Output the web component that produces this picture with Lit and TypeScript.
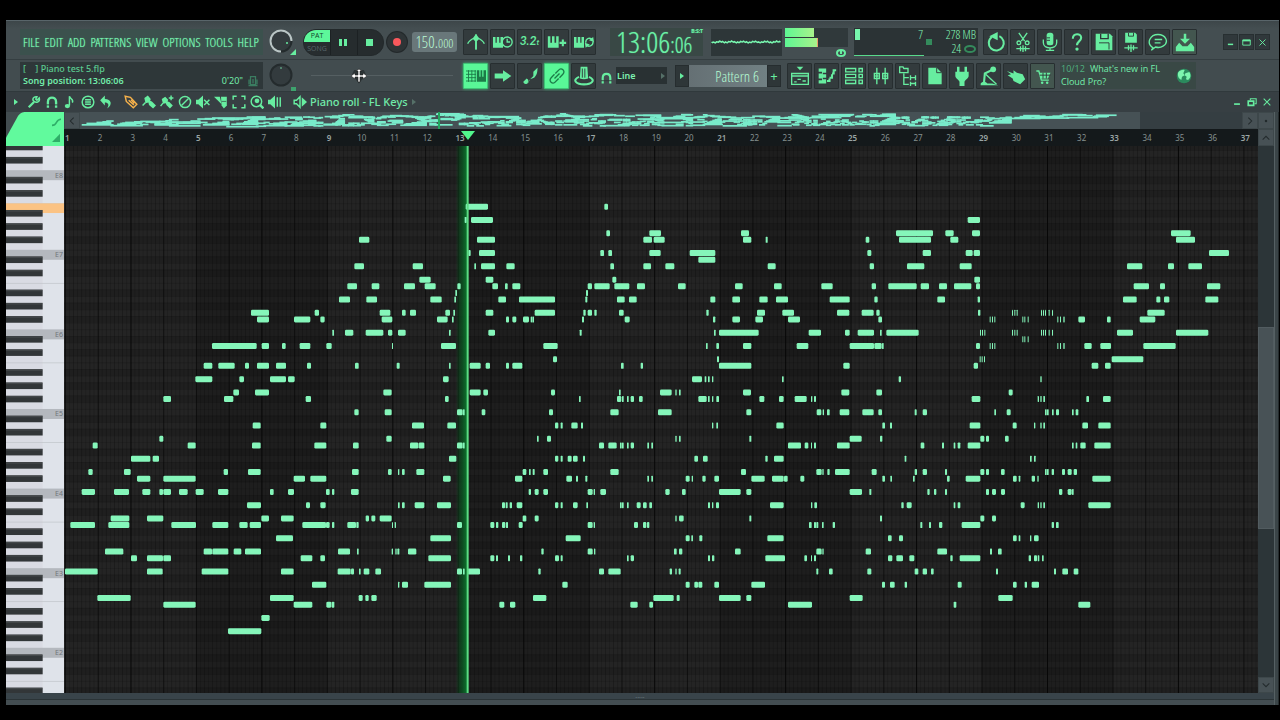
import { LitElement, html, svg, css } from "lit";
import { customElement, state } from "lit/decorators.js";

/* Horizontal unit: one third of a pixel at default zoom. Vertical: one key row = ROW. */
const ROW = 19.9;
const FIRST = 182;
const LEFT = 192;
const WIDTH = 3582;
const HEIGHT = 1641;
const BAR = 98.2;
const BAR0 = 196;
const HEAD = 1403;

type Phrase = { at: number; lanes: Record<number, string> };

const phrases: Phrase[] = [
  { at: 0, lanes: {
    21: "636-770", 24: "611-637 655-704", 26: "586-637", 28: "700-717", 29: "490-513 672-700",
    35: "478-490", 36: "278-293 563-587 756-782 943-979", 38: "393-451 458-477",
    40: "265-278 372-392 671-684 744-782", 41: "411-451 490-587 881-915 931-979",
    43: "245-285 342-387 427-451 478-489 490-513 537-563 587-611 654-685 810-821 864-882",
    45: "741-783 918-930 961-977", 47: "332-388 441-490 784-807 843-881",
    48: "211-285 325-388 514-588 637-685 718-743 749-783 907-978", 50: "828-879",
    52: "315-370 611-636 637-685 701-724 735-783", 53: "393-411 441-489 490-513 902-937 961-975",
    55: "195-293 441-488 605-685 843-881", 57: "936-979", 59: "292-392 810-881",
    60: "490-587 881-937", 62: "784-809", 64: "684-784",
  } },
  { at: 690, lanes: {
    0: "707-774", 2: "704-710 723-789", 5: "387-418 741-795", 7: "715-722 747-795",
    9: "373-402 548-579 733-738 753-795 829-854", 11: "568-602 767-790",
    12: "352-381 425-448 522-555 584-617 682-692 787-804 825-833 847-871", 13: "676-681",
    14: "327-360 409-441 601-635 673-678 805-828 867-975",
    16: "63-117 254-267 449-481 516-527 540-558 646-660 670-675 767-790 914-975",
    17: "81-117 192-241 271-284 455-487 621-653 666-671 828-837 847-859 879-897 902-906 907-912",
    19: "307-312 345-370 407-460 474-487 504-527 657-662 775-795",
    21: "95-117 156-167 209-241 289-305 486-489 633-678 940-983", 23: "969-981",
    24: "45-57 81-117 138-168 231-243 375-386 500-509 657-662 719-752 767-780 828-837 847-877",
    26: "28-42 120-168 174-194 639-656", 28: "75-117 460-485 719-752 760-774 963-975",
    29: "227-243 645-656", 31: "373-386 464-485 681-698 699-704 755-766 957-969",
    33: "68-92 271-289 546-582 652-678 975-985 992-998",
  } },
  { at: 960, lanes: {
    35: "199-215 651-656 681-693",
    36: "99-116 270-295 296-313 411-428 429-434 837-852 865-890 900-905 906-911 921-926 932-942 982-987",
    38: "387-409 705-715 722-728 743-755 759-773 789-795",
    40: "96-116 204-215 234-238 246-254 289-313 608-619 627-632 638-644 670-684 871-896",
    41: "369-392 585-607 739-756 768-774 796-802 982-987",
    43: "18-29 36-43 93-116 626-633 644-656 670-684 803-818 821-825 841-858",
    45: "234-239 246-254 284-313 351-393 546-555 557-563 569-576 590-607 705-715 722-728 759-773 799-804 900-905 906-911 921-926 950-962 969-980",
    47: "137-147 154-166 179-215 608-619 644-656",
    48: "18-29 36-43 82-108 109-116 216-219 224-228 411-426 511-523 528-535 546-556 558-564 596-608 803-818 821-825 942-954 969-979 981-988",
    50: "331-393 737-782", 52: "54-90 111-116 215-219 226-230 232-238 264-289 664-671 803-818 822-826",
    53: "325-393 511-523 528-534 564-570 600-607 705-717 722-728 921-926 932-942",
    55: "53-92 93-102 117-122 131-148 166-183 411-426 429-434 443-480 655-662 837-852 865-902",
    57: "234-238 246-264 313-393 727-743", 59: "116-128 136-146 154-170 639-679",
    60: "19-34 35-43 538-553 570-586 931-953",
  } },
  { at: 1680, lanes: {
    0: "133-144", 4: "139-150 268-303 543-567", 5: "250-276 281-314 549-574 617-623 917-928",
    7: "121-132 145-156 268-302 389-466 922-934", 8: "415-466",
    9: "151-162 250-273 316-343 623-647 929-942", 11: "157-169",
    12: "83-96 103-149 163-208 231-255 354-377 525-548 642-665 784-818 935-948 985-1070", 13: "78-84",
    14: "76-82 171-194 207-230 451-466 517-540 598-623 648-684 809-869 943-953",
    16: "70-77 83-96 103-110 177-191 439-446 591-615 667-702 831-868 905-941 949-959",
    17: "66-72 194-209 459-466 517-540 586-609 684-720 955-966",
    19: "59-65 462-467 477-596 746-783 855-869 893-942 960-965 979-1076",
    21: "438-443 469-477 549-574 710-745 869-942 943-965 966-971", 23: "471-477",
    24: "183-191 242-249 477-574 850-869", 26: "396-426 434-439 444-449 456-460 666-671 1016-1023",
    28: "177-182 300-335 346-350 357-362 549-573 844-868 949-966",
    29: "57-62 171-184 186-191 201-206 212-222 237-248 415-440 444-449 456-460 469-477 598-613 657-671 704-740 753-757 762-768",
    31: "151-176 294-335 559-574 770-784 788-792 801-809 839-868 907-941 955-966",
    33: "34-53 63-69 456-460 469-474 649-671 967-975 990-996",
  } },
  { at: 1920, lanes: {
    35: "106-110 117-122 328-334 629-665 720-727",
    36: "34-39 444-483 494-505 513-516 522-528 591-629 842-853 906-912 941-946 953-961",
    38: "163-174 189-203 376-383 402-431 794-799",
    40: "303-318 529-545 547-551 562-569 585-629 695-710 824-831 848-861 915-921",
    41: "34-39 137-149 155-159 187-197 223-237 334-374 396-431 432-443 481-493 727-735 751-756 819-824 921-929",
    43: "76-89 126-137 237-302 319-334 629-666 688-694 862-869 882-889 915-921",
    45: "28-36 204-210 216-220 228-237 390-431 513-517 523-531 784-791 800-815 941-946 953-961",
    47: "106-110 117-131 328-334 720-726",
    48: "507-515 522-528 529-535 546-551 578-585 841-847 867-873 897-907",
    50: "137-149 154-159 178-187 382-431 744-755 777-789",
    52: "102-110 117-127 285-302 529-545 547-551 677-693 892-921",
    53: "204-210 216-223 376-435 493-501 513-516 522-528 744-757 769-789 808-823 931-938",
    55: "89-96 106-110 116-122 529-535 567-578 682-694 824-835 848-861 873-881",
    57: "137-149 163-174 175-187 223-237 334-375 726-735 750-764 794-801 953-965",
    59: "40-101 110-119 237-302 319-334 629-668", 60: "28-39 444-516 941-949",
  } },
  { at: 2670, lanes: {
    2: "233-270", 4: "18-129 166-191 246-270 843-902", 5: "27-123 181-205 858-915",
    7: "98-123 227-248 251-270 957-1017", 9: "51-103 209-245 711-757 834-852 895-936", 11: "253-270",
    12: "92-117 147-171 192-244 258-270 731-777 810-825 951-991",
    14: "142-165 263-270 699-740 799-811 822-838 946-985",
    16: "264-271 366-369 373-376 380-383 453-456 459-462 465-468 476-479 486-489 772-824",
    17: "299-302 306-309 313-316 397-400 403-406 413-416 502-505 510-513 520-524 565-585 651-662 749-796",
    19: "270-273 276-279 283-286 366-369 373-376 380-383 453-456 459-462 465-468 476-479 486-489 681-729 858-955",
    20: "397-400 403-406 413-416",
    21: "258-270 299-302 306-309 313-316 502-505 510-513 520-524 583-605 631-663 760-857",
    23: "269-272 275-278 282-285 665-760", 24: "251-264 605-625 645-662", 26: "451-455", 28: "356-368",
    29: "245-271 443-447 451-455 460-465 589-597 639-662",
    31: "74-80 98-111 313-318 350-362 465-470 471-476 486-491 498-507 546-551 557-565",
    33: "239-271 368-380 432-436 451-455 460-465 577-594 625-662",
  } },
  { at: 2850, lanes: {
    35: "91-103 108-117 165-176", 36: "53-91 366-371 377-382 391-407 433-482", 38: "240-245 252-257",
    40: "91-103 108-117 153-164 285-290 291-296 305-312 336-345 353-365 371-381",
    41: "47-91 189-200 206-211 245-255 262-266 427-482",
    43: "108-117 126-138 153-165 327-337 353-365 366-371",
    45: "212-224 263-267 271-275 280-285 415-482", 47: "91-103 126-138", 48: "35-91 305-312 318-326",
    50: "189-200 206-211 240-244 252-266", 52: "120-126 144-155",
    53: "29-91 236-243 252-261 263-268 276-281", 55: "138-144 312-318 337-354 371-385",
    57: "189-200 224-231 245-267", 59: "145-188", 60: "385-421",
  } },
];

interface Note { row: number; x: number; w: number }

const notes: Note[] = phrases.flatMap((p) =>
  Object.entries(p.lanes).flatMap(([row, spans]) =>
    spans.split(" ").map((s) => {
      const [a, b] = s.split("-").map(Number);
      return { row: Number(row), x: p.at + a, w: b - a };
    })));

const mod = (n: number) => ((n % 12) + 12) % 12;
const BLACK = new Set([1, 3, 5, 8, 10]);
const rows = Array.from({ length: 84 }, (_, i) => i - 10);
const top = (n: number) => FIRST + (n - 0.5) * ROW;
const wave = Array.from({ length: 70 }, (_, i) =>
  `${i + 0.5},${(13 + Math.sin(i * 2.1) * 0.5 + Math.sin(i * 0.55) * 0.5).toFixed(1)}`).join(" ");

const shapes: Record<string, unknown> = {
  metro: svg`<path class="s" d="M12 3v18M2 14c2-5 7-6 10-8 3 2 8 3 10 8"/><path d="m8 8 4-6 4 6-3 3v10h-2V11z"/>`,
  keysClock: svg`<path d="M0 6h3v7h1.500V6h3v7H9V6h3v13H0z"/><circle class="s" cx="17" cy="12" r="6"/><path class="s" d="M17 8v4h3.500"/>`,
  keysPlus: svg`<path d="M1 5h3v8h2V5h3v8h2V5h3v14H1z"/><path class="s b" d="M15 13h8M19 9v8"/>`,
  keysLoop: svg`<path d="M0 6h3v7h1.500V6h3v7H9V6h3v13H0z"/><path class="s" d="M14 13c0-6 6-7 8-3M23 11c0 6-6 8-8 4"/><path d="m23 6 1 6-6-2zM14 19l-1-6 6 2z"/>`,
  typing: svg`<path d="M13 5h3v8h1.500V5h2v8H21V5h3v14H13z"/><path class="s t" d="M0 6h12M0 10h12M0 14h12M0 18h12M3 5v14M7 5v14M11 5v14"/>`,
  arrow: svg`<path d="M2 9h10V5l10 7-10 7v-4H2z"/>`,
  slide: svg`<path d="M8 15a3 3 0 1 1-3 6c4 0 5-1 6-4l5-5v-5l5-5c0 6-1 9-4 12l-5 2-2 4c-3 3-6 1-6-1z"/>`,
  link: svg`<path class="s" d="m9 15 6-6M9 10l-4 4c-4 4 2 9 5 5l4-4M15 14l4-4c4-4-2-9-5-5l-4 4"/>`,
  knobHat: svg`<path d="M8 1h8l1 14c-3 1-7 1-10 0z"/><path class="s b" d="M6 13c-9 4-3 9 6 9s15-5 6-9"/><path class="cut t" d="M10 3v11M13 3v11"/>`,
  magnet: svg`<path class="s bb" d="M5 22V12c0-10 14-10 14 0v10"/><path class="cut" d="M2 17h20"/>`,
  playlist: svg`<path class="s" d="M2 9h20v13H2zM2 12h20M5 19h3M9 16h4M15 18h4"/><path d="M8 1h8l-4 4z"/>`,
  piano: svg`<path d="M2 3h9v5H7v2h4v4H7v2h4v5H2v-4h4v-2H2v-6h4V7H2z"/><path class="s b" d="M12 18h3v-3M15 14h3v-4M18 9h2V5h3"/>`,
  rack: svg`<path class="s" d="M2 3h12v4H2zM2 10h12v4H2zM2 17h12v4H2z"/><path class="s" d="M18 3h4v4h-4zM18 10h4v4h-4zM18 17h4v4h-4z"/>`,
  mixer: svg`<path class="s" d="M7 2v20M17 2v20M4 9h6v6H4zM14 9h6v6h-6z"/><path d="M5 11h4v2H5zM15 11h4v2h-4z"/>`,
  browser: svg`<path class="s" d="M2 1h4l1 2h5v5H2zM7 9v13h6M7 14h6M15 11v6M21 11v6M15 14h6M15 19v5M21 19v5M15 21h6"/>`,
  page: svg`<path d="M4 2h10l6 6v14H4z"/><path class="cut t" d="M14 2v6h6"/>`,
  plug: svg`<path d="M6 1h3v6h6V1h3v6h2v5c0 3-4 4-5 7v5H9v-5c-1-3-5-4-5-7V7h2z"/>`,
  robot: svg`<path class="s b" d="M17 4 7 9l-1 11"/><circle cx="17" cy="4" r="3.500"/><path d="M2 21c2-3 6-3 8 0l6 0 7 2H2z"/><path class="s" d="m8 10 13 12"/>`,
  hand: svg`<path d="m1 6 8 3V5l4 3 7 2 3 6-6 6-8-4-1-3-6-4 4-1z"/>`,
  cart: svg`<path class="s" d="M4 6h3l3 11h9"/><path d="M8 8h13l-3 7H9z"/><circle cx="11" cy="20" r="1.500"/><circle cx="17" cy="20" r="1.500"/><path class="cut t" d="M12 8v7M16 8v7M8 11h13"/>`,
  undo: svg`<path class="s b" d="M7 6a9 9 0 1 0 9-1"/><path d="M4 5 14 0v10z"/>`,
  cut: svg`<path class="s" d="m7 1 7 10M17 1l-7 10"/><circle class="s" cx="7" cy="13" r="2.200"/><circle class="s" cx="17" cy="13" r="2.200"/><path class="s" d="M4 20h16M9 17v6M12 16v8M15 17v6"/>`,
  mic: svg`<rect x="8" y="1" width="8" height="15" rx="3"/><path class="s" d="M4 9v4c0 8 16 8 16 0V9M12 19v3M7 22h10"/><path class="cut t" d="M8 7h4M8 10h4"/>`,
  help: svg`<path class="s b" d="M7 8c0-7 10-7 10-1 0 4-5 4-5 9"/><circle cx="12" cy="20.500" r="2"/>`,
  save: svg`<path d="M2 2h17l3 3v17H2z"/><path class="cut" d="M8 2v6h9V2"/><path class="cut t" d="M6 13h12v8"/>`,
  saveAs: svg`<path d="M5 1h12l2 2v10H5z"/><path class="cut t" d="M9 1v4h6V1"/><path class="s" d="M4 19h16M9 16v6M12 15v9M15 16v6"/>`,
  chat: svg`<path class="s" d="M6 19C-3 13 3 3 12 3s14 9 6 14c-3 2-6 2-9 1l-5 4zM8 9h9M8 13h7"/>`,
  render: svg`<path d="M10.500 2h3v6H18l-6 6-6-6h4.500z"/><path d="M1 18l4-5 4 4h6l4-4 4 5v5H1z"/>`,
  wrench: svg`<path class="s bb" d="m3 21 9-9"/><path class="s b" d="M21 5c2 7-5 9-9 6s-1-9 5-8l-2 4 2 2z"/>`,
  note: svg`<path class="s b" d="M11 18V2c1 5 8 5 5 11"/><ellipse cx="7.500" cy="19" rx="4.500" ry="3.500"/>`,
  menu: svg`<circle class="s b" cx="12" cy="12" r="10"/><path class="s b" d="M7 8h10M7 12h10M7 16h10"/>`,
  back: svg`<path d="M2 9 10 1v6c11 0 14 10 4 16 4-6 2-10-4-10v5z"/>`,
  pencil: svg`<path class="s b" d="m2 2 2 9 12 11 6-6L11 4z"/><path class="s b" d="m8 9 9 8M12 8l6 6"/>`,
  brush: svg`<path d="m4 5 6-4 5 6-1 3 3 1 7 7-5 5-7-6-1-4-5 1z"/><path class="s b" d="m1 18 5-5"/>`,
  brushPlus: svg`<path d="m3 7 6-4 5 5-1 3 3 1 6 6-5 5-6-6-1-3-5 1z"/><path class="s b" d="M15 5h8M19 1v8M1 19l4-5"/>`,
  stop: svg`<circle class="s b" cx="12" cy="12" r="9.500"/><path class="s b" d="m6 18 12-12"/>`,
  mute: svg`<path d="M0 8h4l8-7v22l-8-7H0z"/><path class="s b" d="m14 8 9 9M23 8l-9 9"/>`,
  slice: svg`<path d="M0 3h10l3 13z"/><path d="M12 3h10v15l-5 5-4-5z"/><path class="cut t" d="M13 11h8"/>`,
  select: svg`<path class="s b" d="M2 8V2h6M16 2h6v6M22 16v6h-6M8 22H2v-6"/>`,
  zoom: svg`<circle class="s b" cx="11" cy="11" r="9"/><circle cx="12" cy="10" r="4"/><path class="s bb" d="m17 17 6 6"/>`,
  listen: svg`<path d="M0 8h4l8-7v22l-8-7H0z"/><path class="s b" d="M16 4v16M21 4v16"/>`,
  speaker: svg`<path class="s b" d="M2 9h4l6-6v18l-6-6H2z"/><path d="m15 4 9 8-9 8z"/>`,
  globe: svg`<circle class="dim" cx="12" cy="12" r="11"/><path class="bright" d="M3 7c3-4 7-5 10-4l-2 5 2 3-4 2-1 5C4 16 2 12 3 7zM14 8l6-2c3 5 2 9-2 12l-3-1 1-4-3-2z"/>`,
  min: svg`<path class="s bb" d="M5 17h14"/>`,
  max: svg`<path class="s b" d="M2 5h20v14H2z"/><path class="s bb" d="M2 7h20"/>`,
  restore: svg`<path class="s bb" d="M3 10h13v10H3z"/><path class="s b" d="M8 8V4h14v12h-4"/>`,
  close: svg`<path class="s b" d="m4 4 16 16M20 4 4 20"/>`,
  metronome: svg`<path class="s b" d="M7 3h10v16H7zM3 21h18M12 8v9M4 9v10M20 9v10"/>`,
};

const icon = (name: string) => html`<svg class="ic" viewBox="0 0 24 24" aria-hidden="true">${shapes[name]}</svg>`;

const tools: [string, string][] = [
  ["metro", "Metronome"], ["keysClock", "Wait for input"], ["digits", "Countdown"],
  ["keysPlus", "Blend recording"], ["keysLoop", "Loop recording"]];
const tools2: [string, string][] = [
  ["typing", "Typing keyboard"], ["arrow", "Step edit"], ["slide", "Slide"], ["link", "Group link"], ["knobHat", "Multilink"]];
const panels: [string, string][] = [
  ["playlist", "Playlist"], ["piano", "Piano roll"], ["rack", "Channel rack"], ["mixer", "Mixer"], ["browser", "Browser"],
  ["page", "Notes"], ["plug", "Plugins"], ["robot", "Tempo tapper"], ["hand", "Touch controller"], ["cart", "Shop"]];
const files: [string, string][] = [
  ["undo", "Undo"], ["cut", "Edit audio"], ["mic", "Record"], ["help", "Help"], ["save", "Save"],
  ["saveAs", "Save version"], ["chat", "Chat"], ["render", "Render"]];
const rollA = ["wrench", "magnet", "note", "menu", "back"];
const rollB = ["pencil", "brush", "brushPlus", "stop", "mute", "slice", "select", "zoom", "listen"];

@customElement("app-root")
export class AppRoot extends LitElement {
  @state() private active = new Set(["typing", "link"]);

  private toggle(id: string) {
    const next = new Set(this.active);
    next.has(id) ? next.delete(id) : next.add(id);
    this.active = next;
  }

  static styles = css`
    :host { --narrow: "Open Sans Condensed Light", "Open Sans Condensed", "Noto Sans ExtraCondensed", "Liberation Sans Narrow", Roboto, sans-serif;
      display: flex; min-height: 100vh; box-sizing: border-box; padding: 20px 1px 15px 6px; background: #000;
      color: #67eda0; font: 10px/12px "Noto Sans", sans-serif; }
    * { box-sizing: border-box; }
    button, input, select { font: inherit; color: inherit; margin: 0; padding: 0; border: 0; background: none; border-radius: 0; }
    button { display: flex; align-items: center; justify-content: center; }
    a { color: inherit; text-decoration: none; }
    svg { display: block; fill: currentColor; }
    .ic { width: 20px; height: 20px; flex: none; }
    .s, .cut { fill: none; stroke: currentColor; stroke-width: 1.600; }
    .b { stroke-width: 2.500; } .bb { stroke-width: 4; } .t { stroke-width: 1.100; }
    .cut { stroke: #30383a; }
    .dim { fill: #2b8a5d; } .bright { fill: #7df5ae; }
    .app { flex: 1; min-width: 0; display: flex; flex-direction: column; background: #424c4f; border-top: 1px solid #59656a; }
    .bar { display: flex; align-items: center; padding: 0 9px 0 14px; }
    .bar.one { height: 38px; padding-top: 4px; background: linear-gradient(#3d4649, #444e51 20%); }
    .bar.two { height: 33px; border-top: 1px solid #353e41; border-bottom: 1px solid #30393c; }
    .menu { width: 243px; height: 26px; display: flex; align-items: center; justify-content: space-between; padding: 0 4px 0 3px;
      background: #3b514d; font: 300 13px/18px var(--narrow); color: #7dfab6; text-shadow: 0 0 1px #62e89a; }
    .hint { width: 243px; height: 27px; background: #2e3739; padding: 1px 4px 2px 3px; display: grid; grid-template-columns: 1fr auto 16px; align-items: end;
      font-size: 9px; line-height: 12px; }
    .hint p { margin: 0; color: #5bc98f; font-weight: 500; grid-column: 1 / -1; white-space: pre; }
    .hint b { font-weight: 600; color: #72eba9; }
    .hint span { color: #72eba9; }
    .hint .ic { width: 12px; height: 12px; color: #3b7d61; justify-self: end; }
    .knob { position: relative; width: 40px; height: 32px; padding: 3px 0 0 3px; }
    .knob input { position: absolute; inset: 0; width: 100%; height: 100%; opacity: 0; }
    .transport { width: 81px; height: 27px; display: flex; background: #262c2e; border-radius: 13px; overflow: hidden; border: 1px solid #23292b; }
    .modes { width: 26px; display: flex; flex-direction: column; font: 7px/11px "Open Sans", sans-serif; }
    .modes button { flex: 1; background: #272d2f; color: #59666a; }
    .modes .on { background: #5df79a; color: #14452b; }
    .transport > button { flex: 1; border-left: 1px solid #1c2123; }
    .transport .ic { width: 12px; height: 12px; }
    .rec { width: 20px; height: 20px; margin-left: 3px; border-radius: 50%; background: #2e3436; box-shadow: 0 0 0 1px #23292b; }
    .rec i { width: 8px; height: 8px; border-radius: 50%; background: #f9585c; }
    .tempo { width: 45px; height: 20px; margin: 0 6px 0 5px; border-radius: 3px; background: #69777a; color: #b9f9d3;
      font: 300 16px/20px var(--narrow); align-items: baseline; }
    .tempo small { font-size: 13px; }
    .set { display: flex; gap: 2px; }
    .set button { width: 25px; height: 26px; background: #333b3d; border: 1px solid #272e30; border-radius: 1px; }
    .set button.on { background: #59f797; color: #1c7b48; border-color: #3fc376; box-shadow: 0 0 3px #37c473; }
    .set button.lit { background: #43564f; }
    .digits { font: italic 500 12px/14px Roboto, sans-serif; }
    .digits small { font-size: 8px; }
    .time { position: relative; width: 93px; height: 28px; margin: 0 8px 0 14px; background: #394845; padding-left: 6px; display: flex; align-items: baseline;
      font: 300 30px/28px var(--narrow); color: #6cf1a6; text-shadow: 0 0 1px #4fc587; }
    .time span { font-size: 22px; }
    .time small { position: absolute; right: 0; top: 0; font: 700 5px/6px "Noto Sans", sans-serif; }
    .scope { width: 71px; height: 27px; background: #2d3638; }
    .scope polyline { fill: none; stroke: #79f8b0; stroke-width: 1.500; }
    .meter { width: 63px; height: 28px; margin: 0 6px 0 3px; display: grid; grid-template-rows: 10px 9px 9px; background: linear-gradient(#30393b 19px, transparent 19px); }
    .meter i { background: linear-gradient(90deg, #5df793, #a8f28a); height: 9px; }
    .meter i.l { width: 29px; } .meter i.r { width: 33px; border-right: 1px solid #e99b6c; }
    .meter svg { width: 10px; height: 8px; justify-self: end; margin: 2px 2px 0 0; }
    .cpu { width: 124px; height: 28px; margin-right: 5px; background: #2b3335; display: grid; grid-template-columns: 70px 1fr; font: 300 12px/14px var(--narrow); color: #84f7b7; }
    .cpu .graph { position: relative; text-align: right; border-bottom: 1px solid #58da8b; padding-right: 1px; }
    .cpu .graph i { position: absolute; left: 1px; top: 1px; width: 5px; height: 11px; background: #77f6ad; }
    .cpu .mem { display: grid; line-height: 14px; padding-right: 2px; grid-template-columns: 6px 1fr; }
    .cpu .mem i { grid-row: 1 / 3; align-self: center; width: 6px; height: 6px; margin-left: 2px; background: #348b5c; }
    .cpu .mem span { display: flex; justify-content: flex-end; align-items: center; gap: 3px; }
    .cpu .mem svg { width: 12px; height: 8px; fill: none; stroke: #348b5c; stroke-width: 2; }
    .win { margin-left: auto; display: flex; gap: 1px; }
    .win button { width: 15px; height: 16px; background: #30383b; border: 1px solid #272f31; }
    .win .ic { width: 9px; height: 9px; }
    .song { position: relative; width: 160px; height: 30px; padding: 0 10px 0 8px; display: flex; }
    .song input { appearance: none; width: 100%; background: linear-gradient(#555f62, #555f62) center / 100% 1px no-repeat; }
    .song input::-webkit-slider-thumb { appearance: none; width: 14px; height: 16px; background: #2c3436; clip-path: polygon(15% 15%, 85% 15%, 100% 45%, 50% 100%, 0 45%); }
    .song svg { position: absolute; left: 48px; top: 7px; width: 16px; height: 16px; }
    .snap { width: 14px; margin: 4px 3px 0 3px; }
    .snap .ic { width: 13px; height: 14px; }
    .pick { position: relative; width: 51px; margin-right: 8px; }
    .pick select { appearance: none; display: block; width: 100%; height: 17px; padding-left: 1px; background: #293133; color: #7df0b0; font-size: 9px; font-weight: 600; }
    .pick i, .caret { width: 0; height: 0; border: 3px solid transparent; border-left: 4px solid #557068; border-right: 0; }
    .pick i { position: absolute; right: 2px; top: 6px; pointer-events: none; }
    .pattern { display: flex; height: 22px; margin-right: 6px; }
    .pattern button { width: 14px; background: #2e3638; border: 1px solid #262d2f; font-size: 13px; }
    .pattern input { width: 78px; text-align: right; padding-right: 8px; background: linear-gradient(90deg, #657074, #718083); color: #b5fbd3; font: 300 15px/20px var(--narrow); }
    .caret.g { border-left-color: #67eda0; }
    .news { width: 136px; height: 27px; margin-left: 5px; background: #394845; display: grid; grid-template-columns: auto 1fr 20px; column-gap: 5px; align-items: center;
      padding: 1px 0 1px 1px; font: 9px/12px "Open Sans", sans-serif; color: #74edab; }
    .news em { font-style: normal; color: #50b080; }
    .news .q { grid-column: 1 / 3; grid-row: 2; }
    .news .ic { width: 16px; height: 16px; grid-column: 3; grid-row: 1 / 3; }
    .title { display: flex; align-items: center; height: 20px; padding: 0 5px 0 5px; background: #373f43; }
    .title button { width: 18px; height: 18px; }
    .title .ic { width: 14px; height: 14px; }
    .title .arrow { width: 10px; margin-right: 4px; }
    .title .gap { margin-left: 7px; }
    .title .pencil { color: #f7b24b; }
    .title h1 { margin: 0 4px 0 1px; font: 500 11px/14px "Noto Sans", sans-serif; color: #71eaa9; }
    .title .win2 { margin-left: auto; display: flex; }
    .title .win2 button { width: 15px; }
    .title .win2 .ic { width: 10px; height: 10px; }
    .editor { flex: 1; display: grid; grid-template-columns: 58px minmax(0, 1fr) 16px 5px; grid-template-rows: 17px 17px minmax(0, 1fr) 12px; }
    .corner { grid-row: 1 / 3; width: 58px; height: 100%; color: #61fa9d; }
    .corner .m { fill: #2fae68; }
    .over { display: flex; background: #353e42; }
    .over button, .cap { width: 16px; background: #475155; color: #232b2d; border: 1px solid #3d474a; }
    .over .ic, .cap .ic { width: 10px; height: 10px; }
    .over .map { flex: 1; height: 100%; min-width: 0; fill: #79eccb; background: #353e42; }
    .over .map .view { fill: #465155; }
    .ruler { overflow: hidden; position: relative; background: #14191b; }
    .ruler ol { list-style: none; display: flex; margin: 0 0 0 -13px; padding: 3px 0 0; width: 100%; color: #84908f; font-size: 8px; line-height: 12px; }
    .ruler li { flex: 0 0 2.741%; text-align: center; }
    .ruler li.k { font-weight: 600; color: #9aa5a4; }
    .ruler svg { position: absolute; top: 1px; width: 14px; height: 10px; margin-left: -7px; color: #51f78c; }
    .keys { position: relative; }
    .keys svg, .roll svg { position: absolute; inset: 0; width: 100%; height: 100%; }
    .keys span { position: absolute; right: 1px; font: 7px/8px "Noto Sans", sans-serif; color: #70767b; }
    .roll { position: relative; }
    .scroll { display: flex; flex-direction: column; background: #2c3538; }
    .scroll button { height: 16px; }
    .track { flex: 1; display: grid; grid-template-rows: 181fr 202fr 148fr; }
    .track i { grid-row: 2; background: #485256; border: 1px solid #525c60; }
    .edge { grid-column: 4; grid-row: 1 / 5; background: #3b4548; border-left: 1px solid #556063; border-right: 1px solid #252c2e; }
    .foot { grid-column: 1 / 4; background: linear-gradient(#39444a 6px, #2b3437 6px, #2b3437 7px, #434d51 7px); text-align: center; font-size: 7px; line-height: 5px; color: #67757a; }
  `;

  private buttons(list: [string, string][], lit = "") {
    return html`<div class="set">${list.map(([id, label]) => html`
      <button aria-label=${label} class=${this.active.has(id) ? "on" : id === lit ? "lit" : ""} @click=${() => this.toggle(id)}>
        ${id === "digits" ? html`<span class="digits">3.2<small>t</small></span>` : icon(id)}
      </button>`)}</div>`;
  }

  private knob(label: string, big: boolean) {
    return html`<label class="knob"><input type="range" aria-label=${label} />
      <svg width="30" height="28" viewBox="0 0 30 28">
        <circle cx="15" cy="12" r="10.500" fill="#333b3e" stroke="#242b2d" stroke-width="2"/>
        ${big
          ? svg`<path d="M15 22.500A10.500 10.500 0 1 1 25.500 12" fill="none" stroke="#b9c5c5" stroke-width="2"/><circle cx="21" cy="14" r="1" fill="#67eda0"/><path d="M30 20v6h-6z"/>`
          : svg`<circle cx="15" cy="5" r="1" fill="#5c9c7f"/><path d="M25 24h5v4h-5z" fill="#3ea36e"/>`}
      </svg></label>`;
  }

  private renderKeys() {
    return html`<div class="keys">
      <svg viewBox="0 0 174 1641" preserveAspectRatio="none" aria-hidden="true">
        <rect width="174" height="1641" fill="#dfe3ea"/>
        <rect width="110" height="1641" fill="#d6d6dd" opacity=".6"/>
        ${rows.map((n) => {
          const m = mod(n);
          if (m === 7) return svg`<rect y=${top(n)} width="174" height="30" fill="#b4b8be"/>`;
          if (m === 0) return svg`<rect y=${top(n)} width="174" height="2" fill="#bfc3c8"/>`;
          return null;
        })}
        <rect y=${top(0)} width="174" height="29" fill="#fbc384"/>
        ${rows.filter((n) => BLACK.has(mod(n))).map((n) => svg`
          <rect y=${top(n)} width="110" height=${ROW} fill="#323638"/>
          <rect y=${top(n) + 1} width="108" height="4" fill="#44484a"/>`)}
      </svg>
      ${[8, 7, 6, 5, 4, 3, 2].map((o) => html`<span style="top:${((top(-5 + (8 - o) * 12) + 4) / HEIGHT) * 100}%">E${o}</span>`)}
    </div>`;
  }

  private renderRoll() {
    const bars = Array.from({ length: 38 }, (_, i) => i);
    return html`<div class="roll">
      <svg viewBox="${LEFT} 0 ${WIDTH} ${HEIGHT}" preserveAspectRatio="none" role="img" aria-label="Notes">
        <defs><linearGradient id="glow"><stop offset="0" stop-color="#0b5a22" stop-opacity="0"/><stop offset=".45" stop-color="#0a5020" stop-opacity=".75"/><stop offset="1" stop-color="#0d7a30"/></linearGradient></defs>
        <rect x=${LEFT} width=${WIDTH} height=${HEIGHT} fill="#242424"/>
        ${rows.map((n) => BLACK.has(mod(n)) ? svg`<rect x=${LEFT} y=${top(n)} width=${WIDTH} height=${ROW} fill="#1f1f1f"/>` : null)}
        ${rows.map((n) => svg`<rect x=${LEFT} y=${top(n)} width=${WIDTH} height="2" fill="#191919" opacity=".5"/>`)}
        ${[4, 12, 20, 28].map((b) => svg`<rect x=${BAR0 + b * BAR} width=${BAR * 4} height=${HEIGHT} fill="#000" opacity=".14"/>`)}
        ${bars.map((b) => [0, 1, 2, 3, 4, 5, 6, 7].map((q) => svg`<rect x=${BAR0 + b * BAR + q * BAR / 8 - 1} width=${q ? 2 : 3} height=${HEIGHT} fill="#060606" opacity=${q ? (q % 2 ? 0.2 : 0.35) : b % 4 === 2 ? 0.95 : 0.65}/>`))}
        <rect x=${HEAD - 36} width="36" height=${HEIGHT} fill="url(#glow)"/>
        ${notes.map((n) => svg`<rect x=${n.x} y=${FIRST + n.row * ROW - 9} width=${n.w} height="18" rx=${Math.min(4, n.w / 3)} fill="#85f6ba"/>`)}
        <rect x=${HEAD - 3} width="6" height=${HEIGHT} fill="#5cdc83"/>
      </svg></div>`;
  }

  render() {
    return html`<main class="app">
      <div class="bar one">
        <nav class="menu">${["FILE", "EDIT", "ADD", "PATTERNS", "VIEW", "OPTIONS", "TOOLS", "HELP"].map((m) => html`<a href="#">${m}</a>`)}</nav>
        ${this.knob("Main volume", true)}
        <div class="transport">
          <div class="modes"><button class="on">PAT</button><button>SONG</button></div>
          <button aria-label="Pause"><svg class="ic" viewBox="0 0 12 12"><path d="M1 3h3v7H1zM6 3h3v7H6z"/></svg></button>
          <button aria-label="Stop"><svg class="ic" viewBox="0 0 12 12"><path d="M2 3h7v7H2z"/></svg></button>
        </div>
        <button class="rec" aria-label="Record"><i></i></button>
        <button class="tempo">150.<small>000</small></button>
        ${this.buttons(tools)}
        <div class="time">13:06<span>:06</span><small>B:S:T</small></div>
        <svg class="scope" viewBox="0 0 71 27"><polyline points=${wave}/></svg>
        <div class="meter"><i class="l"></i><i class="r"></i><svg viewBox="0 0 10 8"><path fill="none" stroke="currentColor" stroke-width="2" d="M1 4c0-4 8-4 8 0s-8 4-8 0M5 2v3"/></svg></div>
        <div class="cpu"><div class="graph"><i></i>7</div>
          <div class="mem"><i></i><span>278 MB</span><span>24 <svg viewBox="0 0 12 8"><ellipse cx="6" cy="4" rx="5" ry="3"/></svg></span></div></div>
        ${this.buttons(files, "render")}
        <div class="win">${[["min", "Minimize"], ["max", "Maximize"], ["close", "Close"]].map(([i, l]) => html`<button aria-label=${l}>${icon(i)}</button>`)}</div>
      </div>
      <div class="bar two">
        <div class="hint"><p>[    ] Piano test 5.flp</p><b>Song position: 13:06:06</b><span>0'20"</span>${icon("metronome")}</div>
        ${this.knob("Main pitch", false)}
        <div class="song"><input type="range" aria-label="Song position" min="0" max="100" value="32" />
          <svg viewBox="0 0 16 16"><path d="M0 8l4-3v2h3V3H5l3-2 3 2H9v4h3V5l4 3-4 3V9H9v5H7V9H4v2z" fill="#fff" stroke="#222" stroke-width=".6"/></svg></div>
        ${this.buttons(tools2)}
        <button class="snap" aria-label="Snap to grid">${icon("magnet")}</button>
        <label class="pick"><select aria-label="Snap"><option>Line</option></select><i></i></label>
        <div class="pattern"><button aria-label="Choose pattern"><i class="caret g"></i></button><input aria-label="Pattern name" value="Pattern 6" /><button aria-label="Add pattern">+</button></div>
        ${this.buttons(panels, "cart")}
        <a class="news" href="#"><em>10/12</em><span>What's new in FL</span><span class="q">Cloud Pro?</span>${icon("globe")}</a>
      </div>
      <div class="title">
        <button class="arrow" aria-label="Piano roll menu"><i class="caret g"></i></button>
        ${rollA.map((i) => html`<button aria-label=${i}>${icon(i)}</button>`)}
        <span class="gap"></span>
        ${rollB.map((i) => html`<button class=${i} aria-label=${i}>${icon(i)}</button>`)}
        <span class="gap"></span>
        <button aria-label="Channel">${icon("speaker")}</button>
        <h1>Piano roll - FL Keys</h1><i class="caret"></i>
        <div class="win2">${[["min", "Minimize editor"], ["restore", "Restore editor"], ["close", "Close editor"]].map(([i, l]) => html`<button aria-label=${l}>${icon(i)}</button>`)}</div>
      </div>
      <section class="editor">
        <svg class="corner" viewBox="0 0 58 33" preserveAspectRatio="none"><path d="M0 33v-8L12 4c2-3 4-4 8-4h38v33z"/><path class="m" d="M54 21v8h-8z"/><path d="M46 13c6 0 3-6 9-6" fill="none" stroke="#2fae68" stroke-width="1.500"/></svg>
        <div class="over">
          <button aria-label="Scroll left"><svg class="ic" viewBox="0 0 24 24"><path class="s b" d="m16 4-8 8 8 8"/></svg></button>
          <svg class="map" viewBox="0 0 1162 17" preserveAspectRatio="none" aria-hidden="true">
            <rect class="view" width="1060" height="17"/>
            ${notes.map((n) => svg`<rect x=${2 + (n.x - BAR0) * 0.2955} y=${1 + n.row * 0.2} width=${n.w * 0.2955 + 3} height="1.700"/>`)}
            <rect x="358" width="2" height="17" fill="#22a860"/>
          </svg>
          <button aria-label="Scroll right"><svg class="ic" viewBox="0 0 24 24"><path class="s b" d="m8 4 8 8-8 8"/></svg></button>
        </div>
        <button class="cap" aria-label="Zoom"><svg class="ic" viewBox="0 0 24 24"><circle cx="12" cy="12" r="3"/></svg></button>
        <div class="ruler">
          <ol>${Array.from({ length: 37 }, (_, i) => html`<li class=${i % 4 === 0 ? "k" : ""}>${i + 1}</li>`)}</ol>
          <svg viewBox="0 0 14 10" style="left:${((HEAD - LEFT) / WIDTH) * 100}%"><path d="M0 1h14L7 10z"/></svg>
        </div>
        <button class="cap" aria-label="Scroll up"><svg class="ic" viewBox="0 0 24 24"><path class="s b" d="m4 16 8-8 8 8"/></svg></button>
        ${this.renderKeys()}
        ${this.renderRoll()}
        <div class="scroll"><div class="track"><i></i></div><button class="cap" aria-label="Scroll down"><svg class="ic" viewBox="0 0 24 24"><path class="s b" d="m4 8 8 8 8-8"/></svg></button></div>
        <div class="edge"></div>
        <div class="foot">.....</div>
      </section>
    </main>`;
  }
}
